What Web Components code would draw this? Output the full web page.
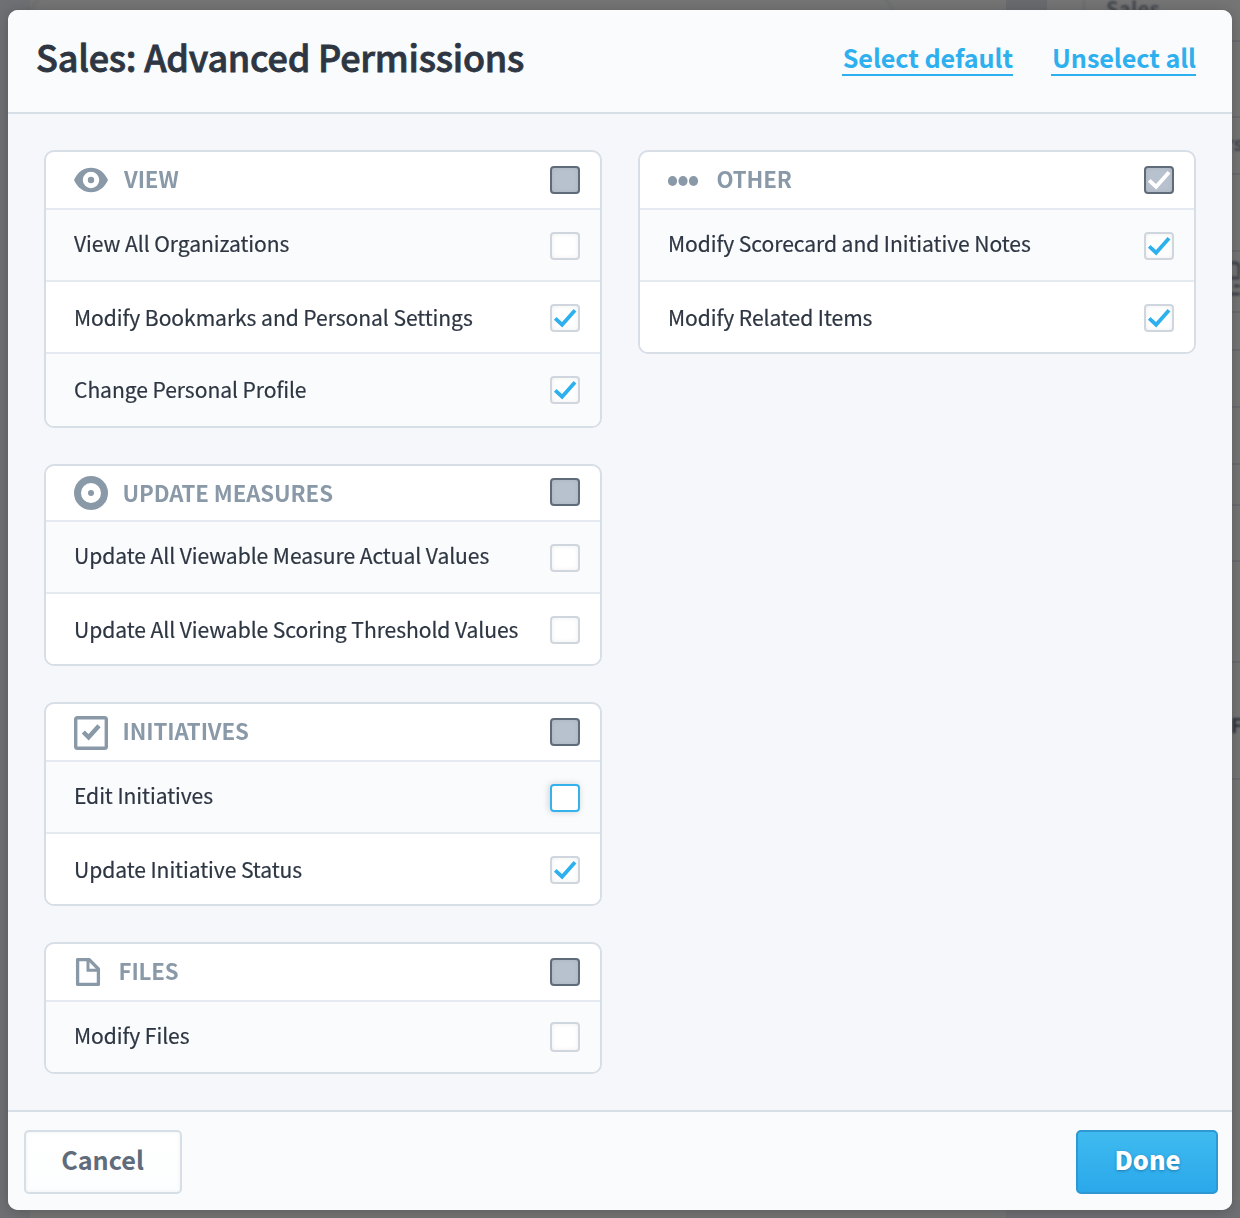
<!DOCTYPE html>
<html lang="en">
<head>
<meta charset="utf-8">
<title>Sales: Advanced Permissions</title>
<style>
	html, body { margin: 0; height: 100%; overflow: hidden; }
	body {
		background: #757575;
		font-family: "Noto Sans CJK SC", "Noto Sans", sans-serif;
		color: #2d3642;
	}
</style>
</head>
<body>
<page-backdrop></page-backdrop>
<permissions-dialog heading="Sales: Advanced Permissions">
	<action-link slot="actions">Select default</action-link>
	<action-link slot="actions">Unselect all</action-link>

	<permission-card slot="left" icon="eye" label="VIEW">
		<permission-row>View All Organizations</permission-row>
		<permission-row checked>Modify Bookmarks and Personal Settings</permission-row>
		<permission-row checked style="--row-height: 72px">Change Personal Profile</permission-row>
	</permission-card>
	<permission-card slot="left" icon="target" label="UPDATE MEASURES" style="--head-height: 54px; --head-check-top: 12px">
		<permission-row>Update All Viewable Measure Actual Values</permission-row>
		<permission-row>Update All Viewable Scoring Threshold Values</permission-row>
	</permission-card>
	<permission-card slot="left" icon="task" label="INITIATIVES">
		<permission-row focused>Edit Initiatives</permission-row>
		<permission-row checked>Update Initiative Status</permission-row>
	</permission-card>
	<permission-card slot="left" icon="file" label="FILES">
		<permission-row style="--check-top: 20px; --check-height: 30px">Modify Files</permission-row>
	</permission-card>

	<permission-card slot="right" icon="dots" label="OTHER" checked>
		<permission-row checked>Modify Scorecard and Initiative Notes</permission-row>
		<permission-row checked>Modify Related Items</permission-row>
	</permission-card>

	<dialog-button slot="footer">Cancel</dialog-button>
	<dialog-button slot="footer" primary>Done</dialog-button>
</permissions-dialog>

<script>
// Icon markup, with the size of each and the space to its title
const icons = {
	eye: {
		width: 34, height: 26, gap: 16, top: 15,
		body: `<path fill="currentColor" fill-rule="evenodd" d="M0 13C3.6 5 9.8.8 17 .8S30.4 5 34 13C30.4 21 24.2 25.200 17 25.200S3.6 21 0 13zM17 4.800a8.200 8.200 0 1 0 0 16.400 8.200 8.200 0 0 0 0-16.400z"/><circle cx="17" cy="13" r="3.200" fill="currentColor"/>`
	},
	target: {
		width: 34, height: 34, gap: 14.5, top: 10,
		body: `<circle cx="17" cy="17" r="13.500" fill="none" stroke="currentColor" stroke-width="7"/><circle cx="17" cy="17" r="3" fill="currentColor"/>`
	},
	task: {
		width: 34, height: 34, gap: 14.5, top: 12,
		body: `<rect x="1.700" y="1.700" width="30.600" height="30.600" rx="1.800" fill="none" stroke="currentColor" stroke-width="3.400"/><path d="M9.300 16L14.600 21.300 25 9.800" fill="none" stroke="currentColor" stroke-width="4.400"/>`
	},
	file: {
		width: 28, height: 28, gap: 16.5, top: 14,
		body: `<path d="M4 1.600H15.200L24.400 11V26.400H3.600V1.600z" fill="none" stroke="currentColor" stroke-width="3.300" stroke-linejoin="round"/><path d="M14 2V12.300H25" fill="none" stroke="currentColor" stroke-width="3"/>`
	},
	dots: {
		width: 30, height: 10, gap: 18.5, top: 24,
		body: `<g fill="currentColor"><ellipse cx="4.500" cy="5" rx="4.600" ry="5"/><ellipse cx="15" cy="5" rx="4.600" ry="5"/><ellipse cx="25.500" cy="5" rx="4.600" ry="5"/></g>`
	}
};

// The dimmed page that shows round the dialog
class PageBackdrop extends HTMLElement {
	constructor() {
		super();
		this.attachShadow({ mode: 'open' }).innerHTML = `
			<style>
			:host {
				position: fixed;
				inset: 0;
				overflow: hidden;
				background: #757575;
			}
			div, span, svg { position: absolute; }
			.side { left: 0; top: 0; width: 30px; height: 1218px; background: #6e7073; }
			.tab { left: 30px; top: -8px; width: 860px; height: 60px; border: 2px solid #6d6f72; border-radius: 24px; filter: blur(1px); }
			.bar { left: 1006px; top: 0; width: 41px; height: 20px; background: #696b6f; }
			.base { left: 1006px; top: 1200px; width: 234px; height: 18px; background: #6f7073; }
			.pane { left: 1083px; top: 0; width: 2px; height: 60px; background: #6a6c70; filter: blur(1px); }
			span { font-weight: 700; font-size: 20px; line-height: 30px; color: #44484e; filter: blur(1px); }
			.line { left: 1228px; width: 12px; height: 2px; background: #696b6f; filter: blur(.5px); }
			</style>
			<div class="side"></div>
			<div class="tab"></div>
			<div class="bar"></div>
			<div class="base"></div>
			<div class="pane"></div>
			<span style="left: 1106px; top: -7px; font-size: 20.6px">Sales</span>
			<span style="left: 1225px; top: 128px">rs</span>
			<span style="left: 1231px; top: 710px; color: #30363e">F</span>
			<svg style="left: 1226px; top: 256px; filter: blur(1px)" width="14" height="42" fill="none" stroke="#3f444a" stroke-width="3"><path d="M5 7h5a4 4 0 0 1 3 4v9M3 22h14v16H3M8 30h8"/></svg>
		`;
		for (const y of [40, 116, 173, 250, 311, 349, 406, 463, 504, 560, 661, 778]) {
			const line = document.createElement('div');
			line.className = 'line';
			line.style.top = y + 'px';
			this.shadowRoot.appendChild(line);
		}
	}
}

class PermissionsDialog extends HTMLElement {
	constructor() {
		super();
		this.attachShadow({ mode: 'open' }).innerHTML = `
			<style>
			:host {
				position: relative;
				display: flex;
				flex-direction: column;
				box-sizing: border-box;
				width: 1224px;
				height: 1200px;
				margin: 10px 8px 8px;
				border-radius: 10px;
				overflow: hidden;
				background: #f5f7fb;
				box-shadow: 0 2px 14px rgba(0, 0, 0, .22);
			}
			header {
				display: flex;
				justify-content: space-between;
				box-sizing: border-box;
				height: 104px;
				padding: 0 36px 0 28px;
				background: #fafbfd;
				border-bottom: 2px solid #d7dee6;
			}
			h1 {
				margin: 0;
				padding-top: 18px;
				font-size: 36px;
				font-weight: 500;
				line-height: 56px;
				letter-spacing: -.23px;
				-webkit-text-stroke: .8px currentColor;
			}
			nav { display: flex; gap: 38px; padding-top: 28px; }
			main {
				flex: 1;
				display: grid;
				grid-template-columns: 558px 558px;
				column-gap: 36px;
				align-items: start;
				padding: 36px 36px 0;
			}
			section { display: flex; flex-direction: column; gap: 36px; }
			footer {
				display: flex;
				justify-content: space-between;
				box-sizing: border-box;
				height: 100px;
				padding: 18px 14px 0 16px;
				background: #fafbfd;
				border-top: 2px solid #d7dee6;
			}
			</style>
			<header><h1></h1><nav><slot name="actions"></slot></nav></header>
			<main>
				<section><slot name="left"></slot></section>
				<section><slot name="right"></slot></section>
			</main>
			<footer><slot name="footer"></slot></footer>
		`;
	}

	connectedCallback() {
		this.shadowRoot.querySelector('h1').textContent = this.getAttribute('heading');
	}
}

class ActionLink extends HTMLElement {
	constructor() {
		super();
		this.attachShadow({ mode: 'open' }).innerHTML = `
			<style>
			:host {
				display: block;
				height: 36px;
				padding-left: 1px;
				border-bottom: 2px solid #2fb0ee;
				color: #2fb0ee;
				font-size: 25.2px;
				font-weight: 700;
				line-height: 38px;
				letter-spacing: -.06px;
				white-space: nowrap;
				cursor: pointer;
			}
			</style>
			<slot></slot>
		`;
	}
}

class CheckBox extends HTMLElement {
	constructor() {
		super();
		this.attachShadow({ mode: 'open' }).innerHTML = `
			<style>
			:host {
				display: block;
				flex: none;
				box-sizing: border-box;
				width: 30px;
				height: var(--check-height, 28px);
				margin-top: var(--check-top, 22px);
				border: 2px solid #d0d6dd;
				border-radius: 4px;
				background: #fff;
				box-shadow: inset 0 0 5px rgba(0, 0, 0, .07);
				color: #2fb0ee;
			}
			:host([group]) {
				background: #b8c2ce;
				border-color: #5f6b79;
				color: #fff;
			}
			:host([focused]) {
				border-color: #35b1ec;
				box-shadow: -1px 0 7px rgba(0, 0, 0, .18);
			}
			svg { display: none; margin: -2px; }
			:host([checked]) svg { display: block; }
			</style>
			<svg width="30" height="28" viewBox="0 0 30 28">
				<path d="M5.200 14.400L12.100 20.700 25 6.300" fill="none" stroke="currentColor" stroke-width="3.800"/>
			</svg>
		`;
		this.addEventListener('click', () => this.toggleAttribute('checked'));
	}
}

class PermissionRow extends HTMLElement {
	constructor() {
		super();
		this.attachShadow({ mode: 'open' }).innerHTML = `
			<style>
			:host {
				display: flex;
				justify-content: space-between;
				height: var(--row-height, 70px);
				padding: 0 20px 0 28px;
				border-top: 2px solid #e5eaf1;
				background: #fff;
			}
			:host(:nth-child(odd)) { background: #fafbfd; }
			span {
				padding-top: 20px;
				font-size: 21.1px;
				line-height: 30px;
				letter-spacing: -.07px;
				white-space: nowrap;
				-webkit-text-stroke: .2px currentColor;
			}
			:host(:first-child) span { padding-top: 18px; }
			</style>
			<span><slot></slot></span>
			<check-box></check-box>
		`;
	}

	connectedCallback() {
		const box = this.shadowRoot.querySelector('check-box');
		box.toggleAttribute('checked', this.hasAttribute('checked'));
		box.toggleAttribute('focused', this.hasAttribute('focused'));
	}
}

class PermissionCard extends HTMLElement {
	constructor() {
		super();
		this.attachShadow({ mode: 'open' }).innerHTML = `
			<style>
			:host {
				display: block;
				border: 2px solid #d7dee6;
				border-radius: 10px;
				overflow: hidden;
				background: #fff;
			}
			.head {
				display: flex;
				height: var(--head-height, 56px);
				padding: 0 20px 0 28px;
				color: #8a99a8;
			}
			.head svg { flex: none; }
			.title {
				flex: 1;
				padding-top: 11px;
				font-size: 22.2px;
				font-weight: 700;
				line-height: 30px;
				letter-spacing: -.1px;
			}
			.head check-box { margin-top: var(--head-check-top, 14px); }
			</style>
			<div class="head"><span class="title"></span><check-box group></check-box></div>
			<slot></slot>
		`;
	}

	connectedCallback() {
		const icon = icons[this.getAttribute('icon')];
		const title = this.shadowRoot.querySelector('.title');
		title.textContent = this.getAttribute('label');
		title.insertAdjacentHTML('beforebegin', `
			<svg width="${icon.width}" height="${icon.height}" style="margin: ${icon.top}px ${icon.gap}px 0 0">${icon.body}</svg>
		`);
		this.shadowRoot.querySelector('check-box').toggleAttribute('checked', this.hasAttribute('checked'));
	}
}

class DialogButton extends HTMLElement {
	constructor() {
		super();
		this.attachShadow({ mode: 'open' }).innerHTML = `
			<style>
			:host {
				display: block;
				box-sizing: border-box;
				width: 158px;
				height: 64px;
				padding-right: 1px;
				border: 2px solid #d7dfe6;
				border-radius: 5px;
				background: linear-gradient(#fff, #fcfdfe);
				box-shadow: inset 0 0 3px rgba(120, 140, 160, .15);
				color: #5f6c7b;
				font-size: 25.2px;
				font-weight: 700;
				line-height: 54px;
				text-align: center;
				cursor: pointer;
			}
			:host([primary]) {
				width: 142px;
				padding: 0 0 0 1px;
				border-color: #2d98d3;
				background: linear-gradient(#3fbbf0, #2aa8ea);
				box-shadow: none;
				color: #fff;
				font-weight: 900;
				text-shadow: 0 1px 3px rgba(0, 60, 110, .45);
			}
			</style>
			<slot></slot>
		`;
	}
}

customElements.define('page-backdrop', PageBackdrop);
customElements.define('permissions-dialog', PermissionsDialog);
customElements.define('action-link', ActionLink);
customElements.define('check-box', CheckBox);
customElements.define('permission-row', PermissionRow);
customElements.define('permission-card', PermissionCard);
customElements.define('dialog-button', DialogButton);
</script>
</body>
</html>
